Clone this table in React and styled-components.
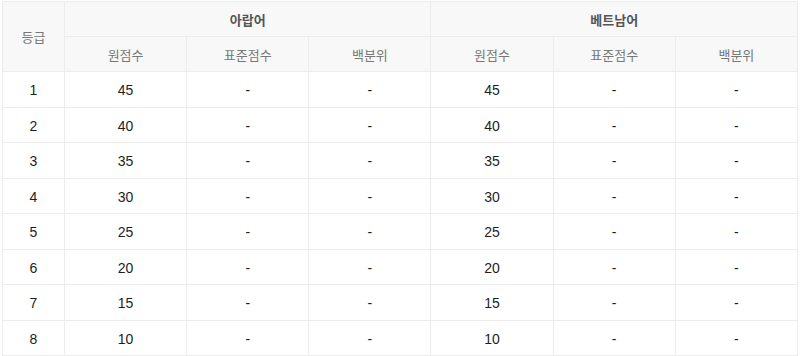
import React from "react";
import styled, { createGlobalStyle } from "styled-components";

const Global = createGlobalStyle`
  html, body { margin: 0; padding: 0; background: #fff; }
  body { font-family: "Liberation Sans", "Noto Sans CJK KR", sans-serif; }
`;

const Wrap = styled.div`
  padding: 1px 2px 0 2px;
`;

const Table = styled.table`
  width: 796px;
  border-collapse: collapse;
  table-layout: fixed;
  border: 1px solid #ececec;
`;

const HeadCell = styled.th`
  background: #f8f8f8;
  border: 1px solid #ececec;
  height: ${(p) => (p.$tall ? "68px" : "34px")};
  padding: 0;
  font-size: 13px;
  font-weight: ${(p) => (p.$strong ? 600 : 400)};
  color: ${(p) => (p.$strong ? "#555" : "#777")};
  text-align: center;
  vertical-align: middle;
`;

const Cell = styled.td`
  border: 1px solid #ececec;
  height: 35.5px;
  padding: 2px 0 0 0;
  box-sizing: border-box;
  font-size: 14px;
  color: #1e1e1e;
  text-align: center;
  vertical-align: middle;
`;

const langs = ["아랍어", "베트남어"];
const subs = ["원점수", "표준점수", "백분위"];
const rows = [45, 40, 35, 30, 25, 20, 15, 10];

export default function App() {
  return (
    <>
      <Global />
      <Wrap>
        <Table>
          <colgroup>
            <col style={{ width: "62px" }} />
            {[0, 1, 2, 3, 4, 5].map((i) => (
              <col key={i} />
            ))}
          </colgroup>
          <thead>
            <tr>
              <HeadCell rowSpan={2} $tall>
                등급
              </HeadCell>
              {langs.map((l) => (
                <HeadCell key={l} colSpan={3} $strong>
                  {l}
                </HeadCell>
              ))}
            </tr>
            <tr>
              {langs.map((l) =>
                subs.map((s) => <HeadCell key={l + s}>{s}</HeadCell>)
              )}
            </tr>
          </thead>
          <tbody>
            {rows.map((score, i) => (
              <tr key={i}>
                <Cell>{i + 1}</Cell>
                <Cell>{score}</Cell>
                <Cell>-</Cell>
                <Cell>-</Cell>
                <Cell>{score}</Cell>
                <Cell>-</Cell>
                <Cell>-</Cell>
              </tr>
            ))}
          </tbody>
        </Table>
      </Wrap>
    </>
  );
}
